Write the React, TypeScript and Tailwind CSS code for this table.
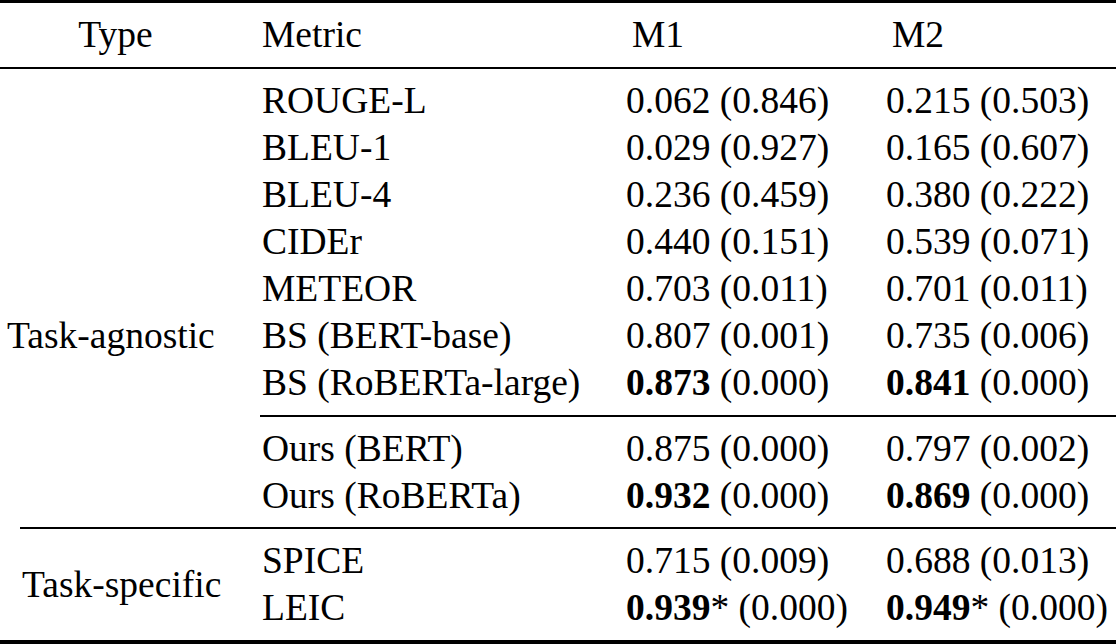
import React from 'react';

type Row = {
    type?: string;
    metric: string;
    m1: [string, string, boolean, boolean?];
    m2: [string, string, boolean, boolean?];
};

// [value, p-value, bold, starred]
const agnosticRows: Row[] = [
    { metric: 'ROUGE-L', m1: ['0.062', '0.846', false], m2: ['0.215', '0.503', false] },
    { metric: 'BLEU-1', m1: ['0.029', '0.927', false], m2: ['0.165', '0.607', false] },
    { metric: 'BLEU-4', m1: ['0.236', '0.459', false], m2: ['0.380', '0.222', false] },
    { metric: 'CIDEr', m1: ['0.440', '0.151', false], m2: ['0.539', '0.071', false] },
    { metric: 'METEOR', m1: ['0.703', '0.011', false], m2: ['0.701', '0.011', false] },
    { type: 'Task-agnostic', metric: 'BS (BERT-base)', m1: ['0.807', '0.001', false], m2: ['0.735', '0.006', false] },
    { metric: 'BS (RoBERTa-large)', m1: ['0.873', '0.000', true], m2: ['0.841', '0.000', true] },
];

const oursRows: Row[] = [
    { metric: 'Ours (BERT)', m1: ['0.875', '0.000', false], m2: ['0.797', '0.002', false] },
    { metric: 'Ours (RoBERTa)', m1: ['0.932', '0.000', true], m2: ['0.869', '0.000', true] },
];

const specificRows: Row[] = [
    { metric: 'SPICE', m1: ['0.715', '0.009', false], m2: ['0.688', '0.013', false] },
    { metric: 'LEIC', m1: ['0.939', '0.000', true, true], m2: ['0.949', '0.000', true, true] },
];

const Value: React.FC<{ v: Row['m1'] }> = ({ v }) => {
    const [val, p, bold, star] = v;
    return (
        <span>
            {bold ? <b className="font-bold">{val}</b> : val}
            {star ? '*' : ''} ({p})
        </span>
    );
};

const MetricRows: React.FC<{ rows: Row[] }> = ({ rows }) => (
    <div className="flex flex-col">
        {rows.map((r) => (
            <div key={r.metric} className="flex h-[47px]">
                <div className="w-[364px] shrink-0 whitespace-nowrap">{r.metric}</div>
                <div className="w-[260px] shrink-0 whitespace-nowrap"><Value v={r.m1} /></div>
                <div className="flex-1 whitespace-nowrap"><Value v={r.m2} /></div>
            </div>
        ))}
    </div>
);

export default function App() {
    return (
        <div className="w-[1120px] h-[644px] bg-white text-black overflow-hidden font-['Liberation_Serif','Times_New_Roman',serif] text-[37.5px] leading-[41px]">
            {/* top rule */}
            <div className="h-[3px] mr-[4px] bg-black" />

            {/* header */}
            <div className="flex h-[47px] mt-[11px]">
                <div className="w-[262px] shrink-0">
                    <div className="w-[231px] text-center">Type</div>
                </div>
                <div className="w-[364px] shrink-0">Metric</div>
                <div className="w-[260px] shrink-0 pl-[6px]">M1</div>
                <div className="flex-1 pl-[6px]">M2</div>
            </div>

            <div className="h-[2px] mt-[6px] mr-[4px] bg-black" />

            {/* task-agnostic */}
            <div className="flex mt-[11px]">
                <div className="w-[262px] shrink-0 flex flex-col">
                    {agnosticRows.map((r) => (
                        <div key={r.metric} className="h-[47px] pl-[7px] whitespace-nowrap">{r.type ?? ''}</div>
                    ))}
                </div>
                <MetricRows rows={agnosticRows} />
            </div>

            <div className="h-[2px] mt-[6px] ml-[260px] mr-[4px] bg-black" />

            <div className="flex mt-[11px]">
                <div className="w-[262px] shrink-0" />
                <MetricRows rows={oursRows} />
            </div>

            <div className="h-[2px] mt-[5px] ml-[20px] mr-[4px] bg-black" />

            {/* task-specific */}
            <div className="flex mt-[11px]">
                <div className="w-[262px] shrink-0 flex items-center pl-[22px] pb-[6px] whitespace-nowrap">
                    Task-specific
                </div>
                <MetricRows rows={specificRows} />
            </div>

            {/* bottom rule */}
            <div className="h-[4px] mt-[6px] mr-[4px] bg-black" />
        </div>
    );
}
